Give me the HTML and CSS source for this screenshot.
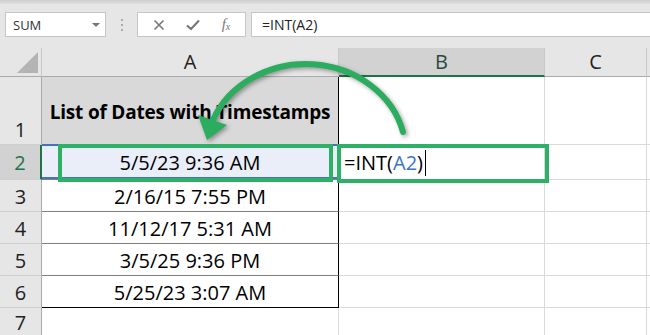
FILE: index.html
```html
<!DOCTYPE html>
<html lang="en">
<head>
<meta charset="UTF-8">
<title>INT formula</title>
<link rel="stylesheet" href="styles.css">
</head>
<body>

<div class="top-strip"></div>

<div class="formula-row">
  <div class="name-box">
    <span>SUM</span>
    <span class="drop"></span>
  </div>
  <div class="grip"><i></i><i></i><i></i></div>
  <div class="fx-buttons">
    <svg width="12" height="12" viewBox="0 0 12 12"><path d="M1.5 1.5 L10.5 10.5 M10.5 1.5 L1.5 10.5" stroke="#777" stroke-width="1.6" fill="none"/></svg>
    <svg width="14" height="12" viewBox="0 0 14 12"><path d="M1 6.5 L5 10 L13 1.5" stroke="#777" stroke-width="2.2" fill="none"/></svg>
    <span class="fx">f<sub>x</sub></span>
  </div>
  <div class="formula-input">=INT(A2)</div>
</div>

<div class="sheet-wrap">
  <div class="sheet">
    <div class="hd corner"><span class="tri"></span></div>
    <div class="hd col">A</div>
    <div class="hd col active-col">B</div>
    <div class="hd col">C</div>
    <div class="hd col rest"></div>

    <div class="hd row">1</div>
    <div class="cell a title">List of Dates with Timestamps</div>
    <div class="cell"></div>
    <div class="cell"></div>
    <div class="cell rest"></div>

    <div class="hd row active-row">2</div>
    <div class="cell a ref">5/5/23 9:36 AM</div>
    <div class="cell edit">=INT(<span class="ref-text">A2</span>)<span class="caret"></span></div>
    <div class="cell"></div>
    <div class="cell rest"></div>

    <div class="hd row">3</div>
    <div class="cell a">2/16/15 7:55 PM</div>
    <div class="cell"></div>
    <div class="cell"></div>
    <div class="cell rest"></div>

    <div class="hd row">4</div>
    <div class="cell a">11/12/17 5:31 AM</div>
    <div class="cell"></div>
    <div class="cell"></div>
    <div class="cell rest"></div>

    <div class="hd row">5</div>
    <div class="cell a">3/5/25 9:36 PM</div>
    <div class="cell"></div>
    <div class="cell"></div>
    <div class="cell rest"></div>

    <div class="hd row">6</div>
    <div class="cell a last">5/25/23 3:07 AM</div>
    <div class="cell"></div>
    <div class="cell"></div>
    <div class="cell rest"></div>

    <div class="hd row">7</div>
    <div class="cell"></div>
    <div class="cell"></div>
    <div class="cell"></div>
    <div class="cell rest"></div>
  </div>

  <!-- annotations drawn over the grid -->
  <div class="ref-box"></div>
  <div class="mark mark-a"></div>
  <div class="mark mark-b"></div>
  <svg class="arrow" width="650" height="287" viewBox="0 48 650 287">
    <path d="M403 132 A100 89 0 0 0 213 120" stroke="#2bac5f" stroke-width="6" stroke-linecap="round" fill="none"/>
    <polygon points="198,115 227,125 207,140" fill="#2bac5f"/>
  </svg>
</div>

</body>
</html>
```

FILE: styles.css
```css
body {
  margin: 0;
  width: 650px;
  height: 335px;
  overflow: hidden;
  background: #e6e6e6;
  font-family: 'Open Sans', sans-serif;
  color: #000;
}

.top-strip {
  height: 4px;
  background: linear-gradient(#cfcfcf, #dedede);
}

/* formula bar */

.formula-row {
  display: flex;
  height: 25px;
  margin-top: 8px;
  padding-left: 5px;
}

.name-box,
.fx-buttons,
.formula-input {
  box-sizing: border-box;
  height: 25px;
  background: #fff;
  border: 1px solid #c6c6c6;
}

.name-box {
  width: 101px;
  display: flex;
  align-items: center;
  justify-content: space-between;
  padding: 0 5px 0 7px;
  font-size: 13px;
  color: #333;
}

.drop {
  width: 0;
  height: 0;
  border-left: 4px solid transparent;
  border-right: 4px solid transparent;
  border-top: 4px solid #777;
}

.grip {
  width: 31px;
  display: flex;
  flex-direction: column;
  align-items: center;
  justify-content: center;
  gap: 3px;
}

.grip i {
  width: 2px;
  height: 2px;
  background: #aaa;
}

.fx-buttons {
  width: 109px;
  display: flex;
  align-items: center;
  justify-content: space-around;
  padding: 0 4px;
}

.fx {
  font-family: 'Liberation Serif', serif;
  font-style: italic;
  font-size: 15px;
  color: #777;
}

.fx sub {
  font-size: 10px;
  vertical-align: -1px;
}

.formula-input {
  flex: 1;
  margin-left: 5px;
  border-right: none;
  padding-left: 10px;
  font-size: 14px;
  line-height: 23px;
  color: #222;
}

/* sheet */

.sheet-wrap {
  position: relative;
  margin-top: 11px;
}

.sheet {
  display: grid;
  grid-template-columns: 42px 297px 206px 102px 1fr;
  grid-template-rows: 29px 68px 35px 32px 32px 32px 32px 30px;
}

.sheet > div {
  box-sizing: border-box;
  display: flex;
  align-items: flex-end;
  justify-content: center;
  font-size: 20px;
  line-height: 1;
  padding-bottom: 4px;
  white-space: nowrap;
}

.hd {
  background: #e6e6e6;
  color: #222;
}

.hd.col {
  border-right: 1px solid #c8c8c8;
  border-bottom: 1px solid #ababab;
}

.hd.row {
  border-right: 1px solid #ababab;
  border-bottom: 1px solid #cfcfcf;
}

.corner {
  border-right: 1px solid #c8c8c8;
  border-bottom: 1px solid #ababab;
  position: relative;
}

.tri {
  position: absolute;
  right: 3px;
  bottom: 3px;
  width: 0;
  height: 0;
  border-left: 21px solid transparent;
  border-bottom: 21px solid #b4b4b4;
}

.hd.active-col {
  background: #d2d2d2;
  color: #2c4a3a;
  border-bottom: 2px solid #217346;
  padding-bottom: 3px;
}

.hd.active-row {
  background: #d2d2d2;
  color: #217346;
  border-right: 2px solid #217346;
  padding-bottom: 6px;
}

.cell {
  background: #fff;
  border-right: 1px solid #dadada;
  border-bottom: 1px solid #dadada;
}

.cell.rest,
.hd.rest {
  border-right: none;
}

.cell.a {
  border-right: 1px solid #000;
  border-bottom: 1px solid #808080;
}

.cell.a.last {
  border-bottom: 1px solid #000;
}

.cell.title {
  background: #d9d9d9;
  font-weight: bold;
  font-size: 19px;
  letter-spacing: -0.2px;
  align-items: center;
  padding-bottom: 0;
  padding-top: 4px;
}

.cell.ref {
  background: #e9eef8;
  padding-bottom: 6px;
}

.cell.edit {
  justify-content: flex-start;
  padding-left: 5px;
  padding-bottom: 6px;
}

.ref-text {
  color: #3b74c8;
}

.caret {
  display: inline-block;
  width: 1px;
  height: 26px;
  margin-left: 2px;
  margin-bottom: -3px;
  background: #000;
}

/* overlays */

.ref-box {
  position: absolute;
  left: 42px;
  top: 96px;
  width: 297px;
  height: 35px;
  box-sizing: border-box;
  border-top: 2px solid #4472c4;
  border-bottom: 2px solid #4472c4;
}

.mark {
  position: absolute;
  box-sizing: border-box;
  border: 4px solid #2eb066;
}

.mark-a {
  left: 58px;
  top: 96px;
  width: 275px;
  height: 38px;
}

.mark-b {
  left: 337px;
  top: 96px;
  width: 212px;
  height: 39px;
}

.arrow {
  position: absolute;
  left: 0;
  top: 0;
  filter: drop-shadow(2px 2px 2px rgba(0, 0, 0, 0.35));
}
```
